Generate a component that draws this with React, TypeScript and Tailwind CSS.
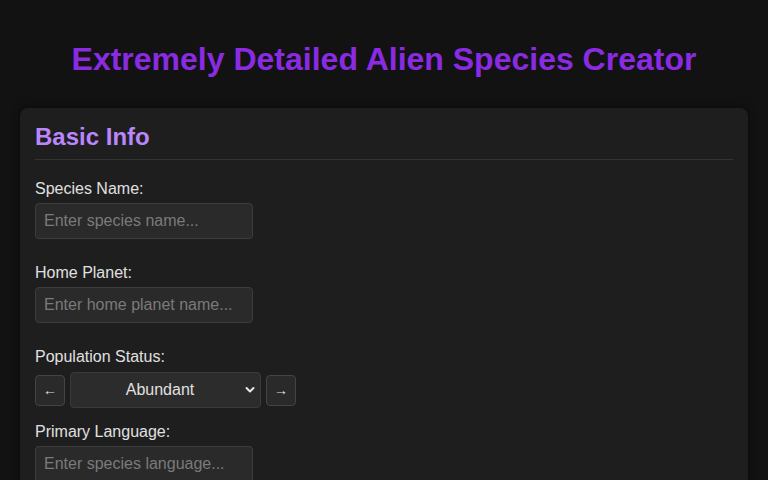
import React from "react";

function Field({ label, placeholder }: { label: string; placeholder: string }) {
  return (
    <div className="mb-[25px]">
      <label className="block mb-[5px] text-[16px] leading-[18px] text-[#e0e0e0]">{label}</label>
      <input
        type="text"
        placeholder={placeholder}
        className="block w-[218px] h-[36px] px-[8px] text-[16px] bg-[#2a2a2a] border border-[#3d3d3d] rounded-[4px] text-[#e0e0e0] placeholder:text-[#7a7a7a] outline-none"
      />
    </div>
  );
}

export default function App() {
  return (
    <div
      className="min-h-[480px] bg-[#121212] px-[20px] pt-[20px] text-[#e0e0e0]"
      style={{ fontFamily: '"Liberation Sans", Arial, sans-serif' }}
    >
      <h1 className="mt-[21px] mb-[30px] text-center text-[32px] leading-[37px] font-bold text-[#8a2be2]">
        Extremely Detailed Alien Species Creator
      </h1>
      <div className="bg-[#1e1e1e] rounded-[8px] px-[15px] pt-[15px] pb-[20px] shadow-[0_0_10px_rgba(0,0,0,0.5)]">
        <h2 className="text-[24px] leading-[28px] font-bold text-[#bb86fc] pb-[8px] border-b border-[#333333] mb-[20px]">
          Basic Info
        </h2>
        <Field label="Species Name:" placeholder="Enter species name..." />
        <Field label="Home Planet:" placeholder="Enter home planet name..." />
        <div className="mb-[15px]">
          <label className="block mb-[6px] text-[16px] leading-[18px] text-[#e0e0e0]">Population Status:</label>
          <div className="flex items-center gap-[5px]">
            <button className="w-[30px] h-[31px] flex items-center justify-center bg-[#2a2a2a] border border-[#444444] rounded-[4px] text-[#e0e0e0] text-[14px]">
              ←
            </button>
            <div className="relative">
              <select
                defaultValue="Abundant"
                className="appearance-none block w-[191px] h-[36px] pl-[8px] pr-[19px] text-center text-[16px] bg-[#2c2c2c] border border-[#3a3a3a] rounded-[4px] text-[#e0e0e0] outline-none"
              >
                <option>Extinct</option>
                <option>Endangered</option>
                <option>Rare</option>
                <option>Stable</option>
                <option>Abundant</option>
              </select>
              <svg
                className="absolute right-[6px] top-[14px] pointer-events-none"
                width="10"
                height="8"
                viewBox="0 0 10 8"
                fill="none"
              >
                <path d="M1.5 2 L5 5.5 L8.5 2" stroke="#e8e8e8" strokeWidth="2" strokeLinecap="round" strokeLinejoin="round" />
              </svg>
            </div>
            <button className="w-[30px] h-[31px] flex items-center justify-center bg-[#2a2a2a] border border-[#444444] rounded-[4px] text-[#e0e0e0] text-[14px]">
              →
            </button>
          </div>
        </div>
        <Field label="Primary Language:" placeholder="Enter species language..." />
      </div>
    </div>
  );
}
